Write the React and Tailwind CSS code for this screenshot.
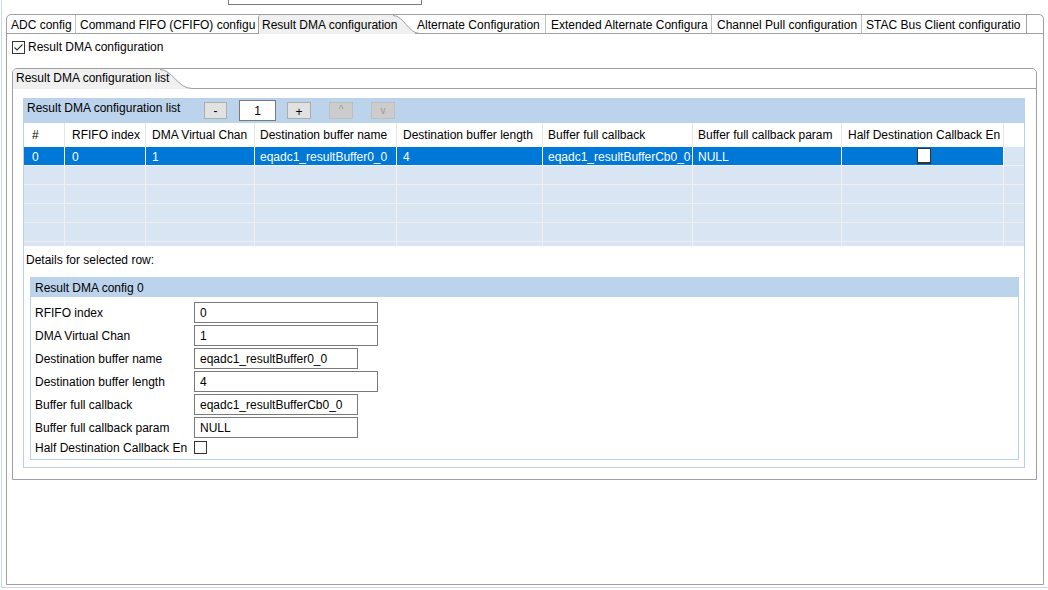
import React from 'react';

const tabs = [
  { label: 'ADC config', cls: 'w-[69px] pl-[4px] border-r border-r-[#c0c0c0]' },
  { label: 'Command FIFO (CFIFO) configu', cls: 'w-[182px] pl-[4px]' },
];

const tabsRight = [
  { label: 'Alternate Configuration', cls: 'w-[131px] pl-[2px] border-r border-r-[#c0c0c0]' },
  { label: 'Extended Alternate Configura', cls: 'w-[166px] pl-[5px] border-r border-r-[#c0c0c0]' },
  { label: 'Channel Pull configuration', cls: 'w-[150px] pl-[5px] border-r border-r-[#c0c0c0]' },
  { label: 'STAC Bus Client configuratio', cls: 'w-[165px] pl-[4px] border-r border-r-[#a0a0a0]' },
];

const cols = [
  { label: '#', value: '0', cls: 'w-[41px] pl-[8px]' },
  { label: 'RFIFO index', value: '0', cls: 'w-[81px] pl-[7px]' },
  { label: 'DMA Virtual Chan', value: '1', cls: 'w-[109px] pl-[6px]' },
  { label: 'Destination buffer name', value: 'eqadc1_resultBuffer0_0', cls: 'w-[142px] pl-[5px]' },
  { label: 'Destination buffer length', value: '4', cls: 'w-[146px] pl-[6px]' },
  { label: 'Buffer full callback', value: 'eqadc1_resultBufferCb0_0', cls: 'w-[150px] pl-[5px]' },
  { label: 'Buffer full callback param', value: 'NULL', cls: 'w-[149px] pl-[5px]' },
  { label: 'Half Destination Callback En', value: null, cls: 'w-[162px] pl-[6px]' },
];

const fields = [
  { label: 'RFIFO index', value: '0', w: 'w-[184px]' },
  { label: 'DMA Virtual Chan', value: '1', w: 'w-[184px]' },
  { label: 'Destination buffer name', value: 'eqadc1_resultBuffer0_0', w: 'w-[164px]' },
  { label: 'Destination buffer length', value: '4', w: 'w-[184px]' },
  { label: 'Buffer full callback', value: 'eqadc1_resultBufferCb0_0', w: 'w-[164px]' },
  { label: 'Buffer full callback param', value: 'NULL', w: 'w-[164px]' },
];

const CheckBox = ({ checked }) => (
  <span className="w-[13px] h-[13px] border border-[#333333] bg-white flex items-center justify-center shrink-0">
    {checked && (
      <svg width="11" height="11" viewBox="0 0 11 11">
        <path d="M1.5 5.5 L4 8 L9.5 2.5" fill="none" stroke="#333333" strokeWidth="1.1" />
      </svg>
    )}
  </span>
);

const Tab = ({ label, cls }) => (
  <div className={`${cls} h-[19px] border-b border-b-[#a0a0a0] pt-[1px] leading-[18px] whitespace-nowrap overflow-hidden shrink-0`}>
    {label}
  </div>
);

const EmptyRow = ({ h }) => (
  <div className={`flex ${h} bg-[#d9e5f3]`}>
    {cols.map((c) => (
      <div key={c.label} className={`${c.cls} border-r border-[#f0f0f0]`} />
    ))}
  </div>
);

export default function App() {
  return (
    <div className="w-[1048px] h-[590px] bg-white overflow-hidden text-[12px] leading-[14px] text-black font-['Liberation_Sans',Arial,sans-serif]">
      <div className="ml-[1px] w-[1047px] h-[588px] border-l border-b border-[#c5d8ec] pl-[4px] pr-[4px] pb-[2px] flex flex-col">
        {/* field above, cut off */}
        <div className="h-[14px] shrink-0">
          <div className="ml-[222px] w-[194px] h-[5px] border-x border-b border-[#7a7a7a]" />
        </div>

        {/* tab folder */}
        <div className="h-[571px] border border-[#a0a0a0] rounded-t-[5px] flex flex-col overflow-hidden">
          <div className="flex h-[19px] shrink-0">
            {tabs.map((t) => (
              <Tab key={t.label} {...t} />
            ))}
            <div className="w-[135px] h-[19px] border-l border-[#a0a0a0] rounded-tl-[3px] bg-[#f0f0f0] pl-[3px] pt-[1px] leading-[18px] whitespace-nowrap shrink-0">
              <span className="relative z-10">Result DMA configuration</span>
            </div>
            <svg width="27" height="19" viewBox="0 0 27 19" className="shrink-0 mr-[-5px]">
              <path d="M0 0 C11 0 15 18 27 18 L27 19 L0 19 Z" fill="#f0f0f0" />
              <path d="M0 0.5 C11 0.5 15 18.5 27 18.5" fill="none" stroke="#a0a0a0" strokeWidth="1" />
            </svg>
            {tabsRight.map((t) => (
              <Tab key={t.label} {...t} />
            ))}
            <div className="flex-1 h-[19px] border-b border-[#a0a0a0]" />
          </div>

          <div className="mt-[7px] ml-[5px] h-[13px] flex items-center gap-[3px] shrink-0">
            <CheckBox checked />
            <span className="pb-[2px]">Result DMA configuration</span>
          </div>

          {/* group */}
          <div className="mt-[14px] ml-[5px] w-[1025px] h-[412px] border border-[#a0a0a0] rounded-t-[5px] flex flex-col shrink-0">
            <div className="flex h-[20px] shrink-0">
              <div className="w-[147px] bg-[#f0f0f0] rounded-tl-[4px] pl-[3px] pt-[2px] whitespace-nowrap">
                <span className="relative z-10">Result DMA configuration list</span>
              </div>
              <svg width="32" height="20" viewBox="0 0 32 20" className="shrink-0">
                <path d="M0 0 C12 0 18 19 32 19 L32 20 L0 20 Z" fill="#f0f0f0" />
                <path d="M0 0.5 C12 0.5 18 19.5 32 19.5" fill="none" stroke="#a0a0a0" strokeWidth="1" />
              </svg>
              <div className="flex-1 border-b border-[#a0a0a0]" />
            </div>

            {/* list section */}
            <div className="mt-[9px] ml-[10px] w-[1002px] h-[370px] border border-[#b9d1ea] flex flex-col">
              <div className="h-[24px] bg-[#bcd3ec] flex items-start shrink-0">
                <div className="w-[180px] pl-[3px] pt-[2px] whitespace-nowrap">Result DMA configuration list</div>
                <div className="mt-[3px] w-[23px] h-[17px] border border-[#adadad] bg-[#e1e1e1] flex items-center justify-center leading-[12px]">-</div>
                <div className="ml-[12px] mt-[1px] w-[37px] h-[21px] border border-[#7a7a7a] bg-white flex items-center justify-center">1</div>
                <div className="ml-[11px] mt-[3px] w-[24px] h-[17px] border border-[#adadad] bg-[#e1e1e1] flex items-center justify-center pt-[2px]">+</div>
                <div className="ml-[18px] mt-[3px] w-[24px] h-[17px] border border-[#bfbfbf] bg-[#cccccc] text-[#9a9a9a] text-[10px] flex justify-center leading-[13px]">^</div>
                <div className="ml-[18px] mt-[3px] w-[24px] h-[17px] border border-[#bfbfbf] bg-[#cccccc] text-[#9a9a9a] text-[10px] flex items-center justify-center">v</div>
              </div>

              {/* table */}
              <div className="h-[123px] flex flex-col shrink-0">
                <div className="flex h-[24px] bg-white shrink-0">
                  {cols.map((c) => (
                    <div key={c.label} className={`${c.cls} border-r border-[#e5e5e5] flex items-center whitespace-nowrap overflow-hidden`}>
                      {c.label}
                    </div>
                  ))}
                  <div className="flex-1" />
                </div>
                <div className="flex h-[19px] bg-[#d9e5f3] border-b border-[#f0f0f0] shrink-0">
                  {cols.map((c) => (
                    <div key={c.label} className={`${c.cls} bg-[#0078d7] text-white border-r border-white pt-[2px] leading-[16px] whitespace-nowrap overflow-hidden`}>
                      {c.value === null ? (
                        <div className="ml-[69px] -mt-[1px] w-[14px] h-[16px] bg-white border border-[#333333] border-b-2" />
                      ) : (
                        c.value
                      )}
                    </div>
                  ))}
                </div>
                {[0, 1, 2, 3].map((i) => (
                  <div key={i} className="border-b border-[#f0f0f0]">
                    <EmptyRow h="h-[18px]" />
                  </div>
                ))}
                <EmptyRow h="h-[4px]" />
              </div>

              <div className="mt-[7px] pl-[2px] shrink-0">Details for selected row:</div>

              {/* detail section */}
              <div className="mt-[10px] ml-[6px] mr-[5px] h-[183px] border border-[#b9d1ea] flex flex-col shrink-0">
                <div className="h-[19px] bg-[#bcd3ec] pl-[4px] flex items-center shrink-0">Result DMA config 0</div>
                <div className="mt-[5px] pl-[4px] flex flex-col gap-[2px]">
                  {fields.map((f) => (
                    <div key={f.label} className="h-[21px] flex items-center">
                      <div className="w-[159px] whitespace-nowrap">{f.label}</div>
                      <div className={`${f.w} h-[21px] border border-[#7a7a7a] bg-white pl-[5px] flex items-center whitespace-nowrap`}>
                        {f.value}
                      </div>
                    </div>
                  ))}
                </div>
                <div className="mt-[3px] pl-[4px] h-[13px] flex items-center">
                  <div className="w-[159px] whitespace-nowrap">Half Destination Callback En</div>
                  <CheckBox />
                </div>
              </div>
            </div>
          </div>
        </div>
      </div>
    </div>
  );
}
